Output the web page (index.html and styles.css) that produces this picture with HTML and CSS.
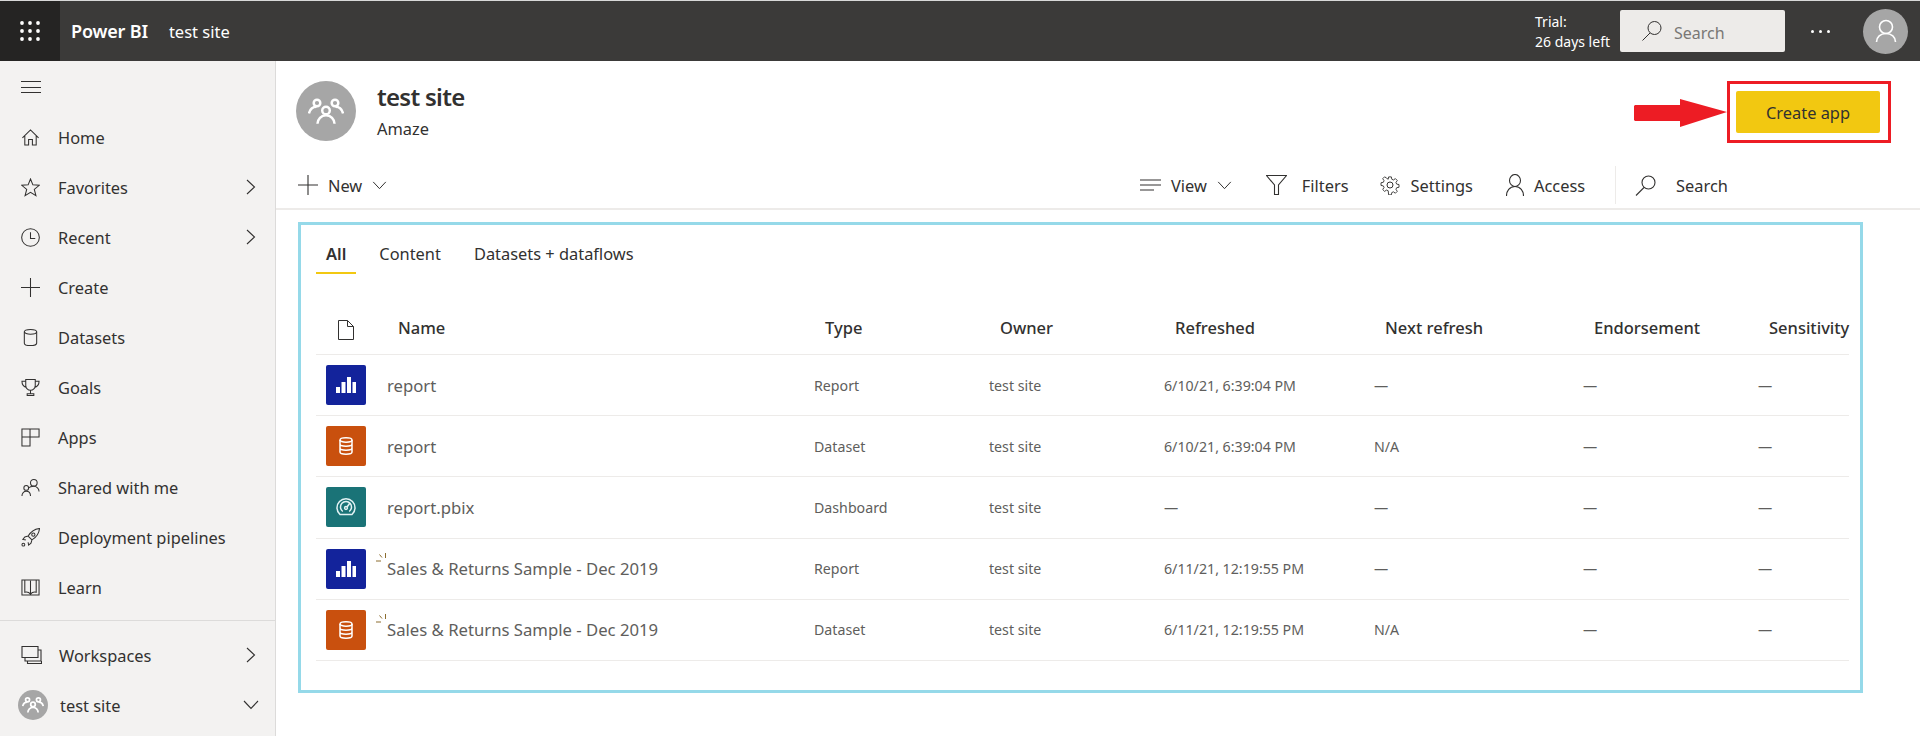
FILE: index.html
```html
<!DOCTYPE html>
<html lang="en">
<head>
<meta charset="utf-8">
<title>test site - Power BI</title>
<link rel="stylesheet" href="styles.css">
</head>
<body>
<header class="topbar">
  <div class="waffle">
    <svg width="20" height="20" viewBox="0 0 20 20" fill="#fff"><circle cx="2" cy="2" r="1.900"/><circle cx="10" cy="2" r="1.900"/><circle cx="18" cy="2" r="1.900"/><circle cx="2" cy="10" r="1.900"/><circle cx="10" cy="10" r="1.900"/><circle cx="18" cy="10" r="1.900"/><circle cx="2" cy="18" r="1.900"/><circle cx="10" cy="18" r="1.900"/><circle cx="18" cy="18" r="1.900"/></svg>
  </div>
  <span class="brand">Power BI</span>
  <span class="crumb">test site</span>
  <div class="trial">Trial:<br>26 days left</div>
  <div class="topsearch">
    <svg class="ic" width="22" height="22" viewBox="0 0 22 22" fill="none" stroke="#323130"><circle cx="13.500" cy="8" r="6.500"/><path d="M9 13 1.500 20.500"/></svg>
    <span>Search</span>
  </div>
  <div class="dots"><i></i><i></i><i></i></div>
  <div class="me">
    <svg width="22" height="24" viewBox="0 0 22 24" fill="none" stroke="#fff" stroke-width="1.600"><circle cx="11" cy="8" r="6.500"/><path d="M1.500 23c0-5 4-8.500 9.500-8.500S20.500 18 20.500 23"/></svg>
  </div>
</header>
<div class="shell">
  <nav class="sidebar">
    <div class="burger"><i></i><i></i><i></i></div>
    <ul class="navlist">
      <li class="navitem">
        <svg class="navic" viewBox="0 0 20 20"><path d="M1.500 10.500 10 2l8.500 8.500M4 8.500V18h4v-6h4v6h4V8.500"/></svg>
        <span>Home</span>
      </li>
      <li class="navitem">
        <svg class="navic" viewBox="0 0 20 20"><path d="M10 1l2.500 6.200 6.700.5-5.200 4.300 1.700 6.500L10 15l-5.700 3.500L6 12 .8 7.700l6.700-.5z"/></svg>
        <span>Favorites</span>
        <svg class="chev" viewBox="0 0 10 16"><path d="M1 1l7.500 7L1 15"/></svg>
      </li>
      <li class="navitem">
        <svg class="navic" viewBox="0 0 20 20"><circle cx="10" cy="10" r="9.300"/><path d="M10 4.500V11h5"/></svg>
        <span>Recent</span>
        <svg class="chev" viewBox="0 0 10 16"><path d="M1 1l7.500 7L1 15"/></svg>
      </li>
      <li class="navitem">
        <svg class="navic" viewBox="0 0 20 20"><path d="M10 0v20M0 10h20"/></svg>
        <span>Create</span>
      </li>
      <li class="navitem">
        <svg class="navic" viewBox="0 0 20 20"><ellipse cx="10" cy="4" rx="6.500" ry="2.500"/><path d="M3.500 4v12c0 1.400 2.900 2.500 6.500 2.500s6.500-1.100 6.500-2.500V4"/></svg>
        <span>Datasets</span>
      </li>
      <li class="navitem">
        <svg class="navic" viewBox="0 0 20 20"><path d="M5 1.500h10V8c0 2.800-2.200 5-5 5s-5-2.200-5-5zM5 3.500H1c0 3.500 1.500 5.500 4.500 6.500M15 3.500h4c0 3.500-1.500 5.500-4.500 6.500M10 13v3M6.500 16.500h7v2h-7z"/></svg>
        <span>Goals</span>
      </li>
      <li class="navitem">
        <svg class="navic" viewBox="0 0 20 20"><path d="M1 1h8.500v8.500H1zM1 9.500h8.500V19H1zM9.500 1H19v8.500H9.500z"/></svg>
        <span>Apps</span>
      </li>
      <li class="navitem">
        <svg class="navic" viewBox="0 0 20 20"><circle cx="13.500" cy="5" r="3.500"/><circle cx="5.500" cy="10.500" r="2.500"/><path d="M8 10.500c.8-1 3-1.800 5.500-1.800 3 0 5.500 2.500 5.500 5.500M1 19c0-3 2-5 4.500-5s4.500 2 4.500 5"/></svg>
        <span>Shared with me</span>
      </li>
      <li class="navitem">
        <svg class="navic" viewBox="0 0 20 20"><path d="M19.500.5c-5 .5-9 3-12 8l4 4c5-3 7.500-7 8-12zM7.500 8.500l-3.500 1-2 2.500 3 .5M11.500 12.500l-1 3.500-2.500 2-.5-3"/><circle cx="13" cy="7" r="1.700"/><circle cx="2.500" cy="17.500" r="1.500"/></svg>
        <span>Deployment pipelines</span>
      </li>
      <li class="navitem">
        <svg class="navic" viewBox="0 0 20 20"><path d="M1 2h18v16H1zM10 3v15M4 2v13c2.500-.5 4.500 0 6 2 1.500-2 3.500-2.500 6-2V2"/></svg>
        <span>Learn</span>
      </li>
    </ul>
    <div class="navfoot">
      <div class="navitem">
        <svg class="navic wide" viewBox="0 0 21 20"><path d="M1 1.500h16v11H1zM4 13v3h16V5h-3M6.500 16.500v2H20.500V16"/></svg>
        <span>Workspaces</span>
        <svg class="chev" viewBox="0 0 10 16"><path d="M1 1l7.500 7L1 15"/></svg>
      </div>
      <div class="navitem cur">
        <div class="miniav">
          <svg width="22" height="16" viewBox="0 0 38 28" fill="none" stroke="#fff" stroke-width="3"><circle cx="9.500" cy="5" r="3.500"/><circle cx="28.500" cy="5" r="3.500"/><circle cx="19" cy="13" r="4"/><path d="M1 16c1-4 4-7 8-7M37 16c-1-4-4-7-8-7M10 27c0-5 4-9 9-9s9 4 9 9"/></svg>
        </div>
        <span>test site</span>
        <svg class="chevd" viewBox="0 0 16 10"><path d="M1 1l7 7.500L15 1"/></svg>
      </div>
    </div>
  </nav>
  <main class="main">
    <section class="wshead">
      <div class="wsav">
        <svg width="36" height="27" viewBox="0 0 38 28" fill="none" stroke="#fff" stroke-width="2.600"><circle cx="9.500" cy="5" r="3.500"/><circle cx="28.500" cy="5" r="3.500"/><circle cx="19" cy="13" r="4"/><path d="M1 16c1-4 4-7 8-7M37 16c-1-4-4-7-8-7M10 27c0-5 4-9 9-9s9 4 9 9"/></svg>
      </div>
      <div class="wstitle">
        <h1>test site</h1>
        <p>Amaze</p>
      </div>
      <div class="annot">
        <svg class="arrow" width="93" height="28" viewBox="0 0 93 28"><path fill="#ed1c24" d="M1 6h45V0l47 13-47 15v-6H1l-1-1V7z"/></svg>
        <div class="hilite"><button class="create">Create app</button></div>
      </div>
    </section>
    <section class="toolbar">
      <div class="tnew">
        <svg width="20" height="20" viewBox="0 0 20 20" stroke="#323130" stroke-width="1.100"><path d="M10 0v20M0 10h20"/></svg>
        <span>New</span>
        <svg class="tchev" viewBox="0 0 16 10"><path d="M1 1l7 7.500L15 1"/></svg>
      </div>
      <div class="tact">
        <div class="titem i10">
          <svg width="21" height="12" viewBox="0 0 21 12" fill="none" stroke="#323130" stroke-width="1.100"><path d="M0 1h21M0 6h21M0 11h14"/></svg>
          <span>View</span>
          <svg class="tchev" viewBox="0 0 16 10"><path d="M1 1l7 7.500L15 1"/></svg>
        </div>
        <div class="titem i15 mfilter">
          <svg width="21" height="20" viewBox="0 0 21 20" fill="none" stroke="#323130" stroke-width="1.100"><path d="M.5.500h20L12.500 10v9.500h-4V10z"/></svg>
          <span>Filters</span>
        </div>
        <div class="titem i11 msettings">
          <svg width="20" height="20" viewBox="0 0 20 20" fill="none" stroke="#323130" stroke-width="1"><circle cx="10" cy="10" r="3"/><path d="M8.500 1h3l.5 2.600 1.800.8 2.200-1.500 2.100 2.100-1.500 2.200.8 1.800 2.600.5v3l-2.600.5-.8 1.800 1.500 2.200-2.100 2.100-2.200-1.500-1.800.8-.5 2.600h-3L8 16.400l-1.800-.8L4 17.100 1.900 15l1.500-2.200-.8-1.800L0 10.500v-3l2.600-.5.800-1.800L1.900 3 4 .900l2.200 1.500L8 3.600z" transform="translate(1 1) scale(.9)"/></svg>
          <span>Settings</span>
        </div>
        <div class="titem i10 maccess">
          <svg width="18" height="22" viewBox="0 0 18 22" fill="none" stroke="#323130" stroke-width="1.100"><ellipse cx="9" cy="6.500" rx="5.500" ry="6"/><path d="M.5 22c0-5 3-9.500 8.500-9.500S17.500 17 17.500 22"/></svg>
          <span>Access</span>
        </div>
        <div class="tsearch">
          <svg width="21" height="21" viewBox="0 0 21 21" fill="none" stroke="#323130" stroke-width="1.100"><circle cx="13.500" cy="7.500" r="6.500"/><path d="M9 12.500 1 20.500"/></svg>
          <span>Search</span>
        </div>
      </div>
    </section>
    <section class="content">
      <div class="tabs">
        <span class="tab on">All</span>
        <span class="tab">Content</span>
        <span class="tab">Datasets + dataflows</span>
      </div>
      <div class="table">
        <div class="thead">
          <div class="cfile"><svg width="16" height="20" viewBox="0 0 16 20" fill="none" stroke="#323130"><path d="M.5.500h9l6 6v13H.5zM9.500.500v6h6"/></svg></div>
          <div>Name</div><div>Type</div><div>Owner</div><div>Refreshed</div><div>Next refresh</div><div>Endorsement</div><div>Sensitivity</div>
        </div>
        <div class="trow">
          <div class="tile blue"><svg width="20" height="16" viewBox="0 0 20 16" fill="#fff"><path d="M0 10h4v6H0zM5.500 5h4v11h-4zM11 0h4v16h-4zM16.500 5H20v11h-3.500z"/></svg></div>
          <div class="nm">report</div><div>Report</div><div>test site</div><div>6/10/21, 6:39:04 PM</div><div>—</div><div>—</div><div>—</div>
        </div>
        <div class="trow">
          <div class="tile orange"><svg width="14" height="18" viewBox="0 0 14 18" fill="none" stroke="#fff" stroke-width="1.500"><ellipse cx="7" cy="3" rx="6" ry="2.200"/><path d="M1 3v12c0 1.200 2.700 2.200 6 2.200s6-1 6-2.200V3M1 7c0 1.200 2.700 2.200 6 2.200S13 8.200 13 7M1 11c0 1.200 2.700 2.200 6 2.200s6-1 6-2.200"/></svg></div>
          <div class="nm">report</div><div>Dataset</div><div>test site</div><div>6/10/21, 6:39:04 PM</div><div>N/A</div><div>—</div><div>—</div>
        </div>
        <div class="trow">
          <div class="tile teal"><svg width="20" height="20" viewBox="0 0 20 20" fill="none" stroke="#e3f2f4" stroke-width="1.500"><path d="M4 17.500a9 9 0 1 1 12 0zM6.800 14.500a5.500 5.500 0 1 1 6.400 0"/><circle cx="10" cy="11" r="1.400"/><path d="M11 10l3-4"/></svg></div>
          <div class="nm">report.pbix</div><div>Dashboard</div><div>test site</div><div>—</div><div>—</div><div>—</div><div>—</div>
        </div>
        <div class="trow">
          <div class="tile blue"><svg width="20" height="16" viewBox="0 0 20 16" fill="#fff"><path d="M0 10h4v6H0zM5.500 5h4v11h-4zM11 0h4v16h-4zM16.500 5H20v11h-3.500z"/></svg></div>
          <div class="nm"><svg class="spark" width="10" height="10" viewBox="0 0 10 10" fill="none" stroke="#8c6d2f"><path d="M9.500 0v5M3.500 1.500 6 4.500M0 8h5"/></svg>Sales &amp; Returns Sample - Dec 2019</div><div>Report</div><div>test site</div><div>6/11/21, 12:19:55 PM</div><div>—</div><div>—</div><div>—</div>
        </div>
        <div class="trow">
          <div class="tile orange"><svg width="14" height="18" viewBox="0 0 14 18" fill="none" stroke="#fff" stroke-width="1.500"><ellipse cx="7" cy="3" rx="6" ry="2.200"/><path d="M1 3v12c0 1.200 2.700 2.200 6 2.200s6-1 6-2.200V3M1 7c0 1.200 2.700 2.200 6 2.200S13 8.200 13 7M1 11c0 1.200 2.700 2.200 6 2.200s6-1 6-2.200"/></svg></div>
          <div class="nm"><svg class="spark" width="10" height="10" viewBox="0 0 10 10" fill="none" stroke="#8c6d2f"><path d="M9.500 0v5M3.500 1.500 6 4.500M0 8h5"/></svg>Sales &amp; Returns Sample - Dec 2019</div><div>Dataset</div><div>test site</div><div>6/11/21, 12:19:55 PM</div><div>N/A</div><div>—</div><div>—</div>
        </div>
      </div>
    </section>
  </main>
</div>
</body>
</html>
```
FILE: styles.css
```css
* { box-sizing: border-box; }
html, body { margin: 0; height: 736px; overflow: hidden; }
body {
  background: #fff;
  color: #323130;
  font-family: "Noto Sans", "Open Sans", sans-serif;
  font-size: 16.400px;
  border-top: 1px solid #d8d8d8;
}
ul { list-style: none; margin: 0; padding: 0; }
h1, p { margin: 0; font-weight: normal; }

.topbar {
  height: 60px;
  background: #3b3a39;
  color: #fff;
  display: flex;
  align-items: center;
}
.waffle {
  width: 60px;
  height: 60px;
  background: #252423;
  display: flex;
  align-items: center;
  justify-content: center;
}
.brand { margin-left: 11px; font-size: 18px; font-weight: 600; letter-spacing: -0.01em; }
.crumb { margin-left: 21px; font-size: 16.500px; }
.trial { margin-left: auto; padding-top: 1px; font-size: 14px; line-height: 20px; color: #fff; }
.topsearch {
  width: 165px;
  height: 42px;
  margin-left: 10px;
  background: #edebe9;
  border-radius: 2px;
  display: flex;
  align-items: center;
  padding-left: 21px;
  gap: 11px;
  color: #797775;
}
.topsearch span { margin-top: 3px; font-size: 16px; }
.dots {
  display: flex;
  gap: 5px;
  margin-left: 26px;
  width: 19px;
}
.dots i { width: 3px; height: 3px; border-radius: 50%; background: #fff; }
.me {
  width: 45px;
  height: 45px;
  margin: 0 12px 0 33px;
  border-radius: 50%;
  background: #a6a6a6;
  display: flex;
  align-items: center;
  justify-content: center;
}

.shell { display: flex; height: 675px; }
.sidebar {
  width: 276px;
  flex: none;
  background: #f3f2f1;
  border-right: 1px solid #dcdbda;
  display: flex;
  flex-direction: column;
}
.burger {
  height: 51px;
  padding: 20px 0 0 21px;
  display: flex;
  flex-direction: column;
  gap: 4.500px;
}
.burger i { width: 20px; height: 1px; background: #323130; }
.navlist { display: flex; flex-direction: column; }
.navitem {
  height: 50px;
  display: flex;
  align-items: center;
  padding-left: 21px;
  position: relative;
  color: #323130;
}
.navitem > span { margin-left: 18px; }
.navic {
  width: 19px;
  height: 19px;
  flex: none;
  fill: none;
  stroke: #323130;
  stroke-width: 1.100;
}
.navic.wide { width: 21px; height: 20px; }
.chev {
  position: absolute;
  left: 246px;
  top: 17px;
  width: 10px;
  height: 16px;
  fill: none;
  stroke: #323130;
  stroke-width: 1.100;
}
.chevd {
  position: absolute;
  left: 243px;
  top: 20px;
  width: 16px;
  height: 10px;
  fill: none;
  stroke: #323130;
  stroke-width: 1.100;
}
.navfoot {
  margin-top: 8px;
  border-top: 1px solid #dcdbda;
  padding-top: 9px;
}
.navfoot .navitem > span { margin-left: 17px; }
.navfoot .cur { padding-left: 18px; }
.navfoot .cur > span { margin-left: 12px; }
.miniav {
  width: 30px;
  height: 30px;
  flex: none;
  border-radius: 50%;
  background: #a6a6a6;
  display: flex;
  align-items: center;
  justify-content: center;
}

.main { flex: 1; min-width: 0; }
.wshead {
  height: 99px;
  padding: 20px 29px 0 20px;
  display: flex;
  align-items: flex-start;
}
.wsav {
  width: 60px;
  height: 60px;
  border-radius: 50%;
  background: #a6a6a6;
  display: flex;
  align-items: center;
  justify-content: center;
  flex: none;
}
.wstitle { margin-left: 21px; }
.wstitle h1 { font-size: 24px; font-weight: 600; line-height: 32px; letter-spacing: -0.03em; }
.wstitle p { line-height: 22px; margin-top: 5px; }
.annot {
  margin-left: auto;
  display: flex;
  align-items: center;
  height: 62px;
}
.arrow { display: block; margin-top: 1px; }
.hilite {
  width: 164px;
  height: 62px;
  border: 3px solid #ed1c24;
  padding: 7px 8px 7px 6px;
}
.create {
  width: 144px;
  height: 42px;
  border: 0;
  border-radius: 2px;
  background: #f2c811;
  color: #323130;
  font: inherit;
}

.toolbar {
  height: 50px;
  border-bottom: 2px solid #edebe9;
  display: flex;
  align-items: center;
  padding: 2px 0 0 22px;
}
.tnew { display: flex; align-items: center; }
.tnew span { margin-left: 10px; }
.tchev {
  width: 15px;
  height: 9px;
  fill: none;
  stroke: #323130;
  stroke-width: 1.100;
  margin-left: 10px;
}
.tact { display: flex; align-items: center; margin-left: auto; margin-right: 192px; }
.titem { display: flex; align-items: center; }
.i10 span { margin-left: 10px; }
.i15 span { margin-left: 15px; }
.i11 span { margin-left: 11px; }
.mfilter { margin-left: 34px; }
.msettings { margin-left: 31px; }
.maccess { margin-left: 33px; }
.tsearch {
  margin-left: 30px;
  padding-left: 19px;
  height: 38px;
  border-left: 1px solid #edebe9;
  display: flex;
  align-items: center;
  gap: 20px;
}

.content {
  margin: 12px 0 0 22px;
  width: 1565px;
  height: 471px;
  border: 3px solid #95d9e9;
  padding: 0 11px 0 15px;
}
.tabs { display: flex; gap: 13px; height: 48px; align-items: flex-start; padding-top: 15px; }
.tab { height: 34px; line-height: 28px; padding: 0 10px; }
.tab.on { font-weight: 600; border-bottom: 2px solid #f2c811; }
.table { margin-top: 37px; }
.thead, .trow {
  display: grid;
  grid-template-columns: 71px 427px 175px 175px 210px 209px 175px 1fr;
  align-items: center;
  border-bottom: 1px solid #edebe9;
}
.thead { height: 45px; padding-bottom: 10px; font-weight: 500; font-size: 16.500px; }
.thead > div { padding-left: 11px; white-space: nowrap; }
.thead > .cfile { padding: 0 0 0 22px; margin-top: 5px; display: flex; }
.trow { height: 61.200px; font-size: 14.200px; color: #605e5c; }
.tile {
  width: 40px;
  height: 40px;
  margin-left: 10px;
  border-radius: 2px;
  display: flex;
  align-items: center;
  justify-content: center;
}
.blue { background: #13239b; }
.orange { background: #c9500e; }
.teal { background: #1a7377; }
.nm { font-size: 16.700px; position: relative; }
.spark { position: absolute; left: -11px; top: -4px; }
```
